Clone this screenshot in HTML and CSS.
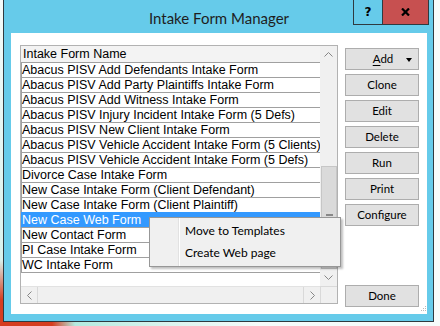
FILE: index.html
```html
<!DOCTYPE html>
<html>
<head>
<meta charset="utf-8">
<link rel="stylesheet" href="styles.css">
</head>
<body>
<div class="window">
  <div class="titlebar">
    <div class="tb-spacer"></div>
    <div class="title">Intake Form Manager</div>
    <div class="caption-btns">
      <div class="cap cap-help">?</div>
      <div class="cap cap-close">
        <svg width="9" height="8" viewBox="0 0 9 8"><path d="M1 0.5 L8 7.5 M8 0.5 L1 7.5" stroke="#000" stroke-width="2.2" fill="none"/></svg>
      </div>
    </div>
  </div>
  <div class="client">
    <div class="listview">
      <div class="lv-content">
        <div class="lv-header">Intake Form Name</div>
        <div class="lv-row">Abacus PISV Add Defendants Intake Form</div>
        <div class="lv-row">Abacus PISV Add Party Plaintiffs Intake Form</div>
        <div class="lv-row">Abacus PISV Add Witness Intake Form</div>
        <div class="lv-row">Abacus PISV Injury Incident Intake Form (5 Defs)</div>
        <div class="lv-row">Abacus PISV New Client Intake Form</div>
        <div class="lv-row">Abacus PISV Vehicle Accident Intake Form (5 Clients)</div>
        <div class="lv-row">Abacus PISV Vehicle Accident Intake Form (5 Defs)</div>
        <div class="lv-row">Divorce Case Intake Form</div>
        <div class="lv-row">New Case Intake Form (Client Defendant)</div>
        <div class="lv-row">New Case Intake Form (Client Plaintiff)</div>
        <div class="lv-row selected">New Case Web Form</div>
        <div class="lv-row">New Contact Form</div>
        <div class="lv-row">PI Case Intake Form</div>
        <div class="lv-row">WC Intake Form</div>
      </div>
      <div class="vscroll">
        <div class="sb-btn">
          <svg width="9" height="5" viewBox="0 0 9 5"><path d="M0.5 4.5 L4.5 0.5 L8.5 4.5" stroke="#868686" fill="none"/></svg>
        </div>
        <div class="sb-track-v">
          <div class="thumb-v"><div class="grip"></div></div>
        </div>
        <div class="sb-btn">
          <svg width="9" height="5" viewBox="0 0 9 5"><path d="M0.5 0.5 L4.5 4.5 L8.5 0.5" stroke="#868686" fill="none"/></svg>
        </div>
      </div>
      <div class="hscroll">
        <div class="sb-btn sb-left">
          <svg width="5" height="9" viewBox="0 0 5 9"><path d="M4.5 0.5 L0.5 4.5 L4.5 8.5" stroke="#868686" fill="none"/></svg>
        </div>
        <div class="sb-track-h"></div>
        <div class="sb-btn sb-right">
          <svg width="5" height="9" viewBox="0 0 5 9"><path d="M0.5 0.5 L4.5 4.5 L0.5 8.5" stroke="#868686" fill="none"/></svg>
        </div>
      </div>
      <div class="sb-corner"></div>
    </div>
    <div class="buttons">
      <div class="btn btn-add"><span class="btn-label"><u>A</u>dd</span><span class="drop"></span></div>
      <div class="btn">Clone</div>
      <div class="btn">Edit</div>
      <div class="btn">Delete</div>
      <div class="btn">Run</div>
      <div class="btn">Print</div>
      <div class="btn">Configure</div>
      <div class="btn btn-done">Done</div>
    </div>
    <div class="ctxmenu">
      <div class="ctx-item">Move to Templates</div>
      <div class="ctx-item">Create Web page</div>
    </div>
    <div class="grip-corner">
      <svg width="6" height="6" viewBox="0 0 6 6" fill="#b8b8b8"><rect x="4" y="0" width="1" height="1"/><rect x="2" y="2" width="1" height="1"/><rect x="4" y="2" width="1" height="1"/><rect x="0" y="4" width="1" height="1"/><rect x="2" y="4" width="1" height="1"/><rect x="4" y="4" width="1" height="1"/></svg>
    </div>
  </div>
</div>
</body>
</html>
```

FILE: styles.css
```css
* { box-sizing: border-box; }
html, body { margin: 0; padding: 0; }
body {
  width: 440px;
  height: 326px;
  overflow: hidden;
  padding-left: 3px;
  background:
    linear-gradient(to right, #d63c1f 0, #d63c1f 52px, #b4eadf 75px, #dcf4ef 170px, #f6fbfa 260px) left bottom / 100% 4px no-repeat,
    linear-gradient(to bottom, #f4faf9 0, #d9f1ec 260px, #d63c1f 300px) left top / 3px 100% no-repeat,
    #f7fbfa;
  font-family: "Liberation Sans", Arial, sans-serif;
}
.window {
  width: 431px;
  height: 322px;
  border: 1px solid #2f3a40;
  border-top: none;
  background: #66cbea;
  padding: 0 6px 7px 7px;
  display: flex;
  flex-direction: column;
}
.titlebar {
  height: 33px;
  display: grid;
  grid-template-columns: 1fr auto 1fr;
  align-items: start;
}
.title {
  font-family: Lato, "Open Sans", sans-serif;
  font-size: 15px;
  color: #1e1e1e;
  line-height: 20px;
  margin-top: 8px;
}
.caption-btns {
  display: flex;
  justify-content: flex-end;
  margin-right: -2px;
}
.cap {
  height: 25px;
  border: 1px solid #2f3a40;
  border-top: none;
  display: flex;
  align-items: center;
  justify-content: center;
}
.cap-help {
  width: 29px;
  border-right: none;
  font-family: "DejaVu Sans", sans-serif;
  font-weight: bold;
  font-size: 12px;
  color: #000;
}
.cap-close {
  width: 47px;
  background: #c75050;
}
.client {
  height: 281px;
  background: #fff;
  display: flex;
  gap: 7px;
  padding: 12px 8px 7px 9px;
  position: relative;
}
.listview {
  width: 318px;
  height: 259px;
  border: 1px solid #b2b2b2;
  display: grid;
  grid-template-columns: 299px 17px;
  grid-template-rows: 240px 17px;
  flex: none;
}
.lv-content {
  overflow: hidden;
  font-size: 12.5px;
  color: #000;
}
.lv-header {
  height: 17px;
  background: #f3f3f3;
  border-bottom: 1px solid #a0a0a0;
  padding-left: 2px;
  line-height: 16px;
}
.lv-row {
  height: 15px;
  line-height: 14px;
  border-left: 1px solid #a0a0a0;
  border-bottom: 1px solid #a0a0a0;
  padding-left: 0;
  white-space: nowrap;
}
.lv-row.selected {
  background: #3399ff;
  color: #fff;
  box-shadow: 0 -1px 0 #3399ff;
  border-left-color: #3399ff;
}
.vscroll {
  display: flex;
  flex-direction: column;
  background: #f0f0f0;
}
.sb-btn {
  height: 17px;
  flex: none;
  display: flex;
  align-items: center;
  justify-content: center;
  background: #f0f0f0;
}
.sb-track-v {
  flex: 1;
}
.thumb-v {
  margin-top: 103px;
  height: 103px;
  margin-left: 1px;
  background: #dadada;
  border: 1px solid #c6c6c6;
  display: flex;
  justify-content: center;
}
.grip {
  width: 7px;
  height: 2px;
  background: #888;
  margin-top: 47px;
}
.hscroll {
  display: flex;
  background: #f0f0f0;
  border-top: 1px solid #e2e2e2;
}
.sb-left, .sb-right {
  width: 17px;
  height: auto;
}
.sb-left { border-right: 1px solid #d9d9d9; }
.sb-right { border-left: 1px solid #d9d9d9; }
.sb-track-h { flex: 1; }
.sb-corner {
  background: #f0f0f0;
  border-left: 1px solid #d9d9d9;
  border-top: 1px solid #d9d9d9;
}
.buttons {
  width: 74px;
  margin-top: 3px;
  display: flex;
  flex-direction: column;
  gap: 4px;
}
.btn {
  height: 22px;
  border: 1px solid #adadad;
  background: #e1e1e1;
  font-family: Lato, "Open Sans", sans-serif;
  font-size: 11.5px;
  color: #000;
  display: flex;
  align-items: center;
  justify-content: center;
  padding-bottom: 1px;
}
.btn-add {
  position: relative;
}
.btn-add .btn-label { margin-left: 2px; }
.btn-add u { text-decoration-thickness: 1px; text-underline-offset: 2px; }
.drop {
  position: absolute;
  right: 6px;
  top: 9px;
  width: 0;
  height: 0;
  border-left: 3.5px solid transparent;
  border-right: 3.5px solid transparent;
  border-top: 4px solid #000;
}
.btn-done { margin-top: auto; }
.ctxmenu {
  position: absolute;
  left: 138px;
  top: 184px;
  width: 192px;
  height: 50px;
  background: #f0f0f0;
  border: 1px solid #979797;
  box-shadow: 2px 2px 2px rgba(0,0,0,0.25);
  padding: 2px 2px;
  font-family: Lato, "Open Sans", sans-serif;
  font-size: 12px;
  color: #000;
  background-image: linear-gradient(to right, transparent 28px, #e2e2e2 28px, #e2e2e2 29px, #fff 29px, #fff 30px, transparent 30px);
}
.ctx-item {
  height: 22px;
  line-height: 22px;
  padding-left: 33px;
}
.grip-corner {
  position: absolute;
  right: 0px;
  bottom: 2px;
  line-height: 0;
}
```
